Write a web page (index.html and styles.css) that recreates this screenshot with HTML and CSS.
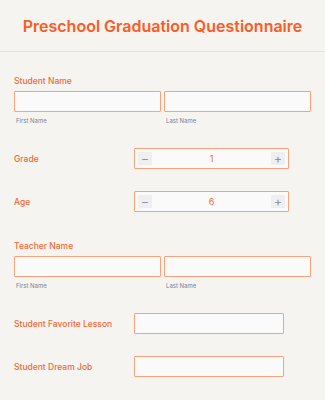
FILE: index.html
```html
<!DOCTYPE html>
<html lang="en">
<head>
    <meta charset="UTF-8">
    <meta name="viewport" content="width=device-width, initial-scale=1.0">
    <title>Preschool Graduation Questionnaire</title>
    <link rel="stylesheet" href="styles.css">
</head>
<body>
    <div class="header">
        <h1>Preschool Graduation Questionnaire</h1>
    </div>
    <form class="form">
        <div class="form-line">
            <label class="label">Student Name</label>
            <div class="name-group">
                <div>
                    <input type="text" name="student-first">
                    <small>First Name</small>
                </div>
                <div>
                    <input type="text" name="student-last">
                    <small>Last Name</small>
                </div>
            </div>
        </div>

        <div class="form-line row">
            <label class="label">Grade</label>
            <div class="spinner">
                <span class="spin-btn">&minus;</span>
                <span class="spin-value">1</span>
                <span class="spin-btn">+</span>
            </div>
        </div>

        <div class="form-line row">
            <label class="label">Age</label>
            <div class="spinner">
                <span class="spin-btn">&minus;</span>
                <span class="spin-value">6</span>
                <span class="spin-btn">+</span>
            </div>
        </div>

        <div class="form-line spaced">
            <label class="label">Teacher Name</label>
            <div class="name-group">
                <div>
                    <input type="text" name="teacher-first">
                    <small>First Name</small>
                </div>
                <div>
                    <input type="text" name="teacher-last">
                    <small>Last Name</small>
                </div>
            </div>
        </div>

        <div class="form-line row">
            <label class="label">Student Favorite Lesson</label>
            <input type="text" class="short" name="lesson">
        </div>

        <div class="form-line row">
            <label class="label">Student Dream Job</label>
            <input type="text" class="short" name="dream-job">
        </div>
    </form>
</body>
</html>
```

FILE: styles.css
```css
body {
    font-family: Inter, "Liberation Sans", Arial, sans-serif;
    background-color: #f5f4f1;
    margin: 0;
    padding: 0;
}

.header {
    height: 51px;
    border-bottom: 1px solid #e3e2df;
    display: flex;
    align-items: center;
    justify-content: center;
}

h1 {
    margin: 0;
    font-size: 16px;
    font-weight: 600;
    color: #ff5a1f;
}

.form {
    padding-top: 12px;
}

.form-line {
    padding: 11px 14px;
}

.form-line.spaced {
    padding-top: 17px;
}

.label {
    display: block;
    font-size: 8.5px;
    line-height: 12px;
    font-weight: 500;
    color: #f26a33;
    margin-bottom: 4px;
}

.row {
    display: flex;
    align-items: center;
}

.row .label {
    width: 120px;
    margin-bottom: 0;
}

.name-group {
    display: grid;
    grid-template-columns: 1fr 1fr;
    gap: 3px;
}

input[type="text"] {
    display: block;
    width: 100%;
    height: 21px;
    border: 1px solid #f9a27c;
    border-radius: 1px;
    background-color: #fafafa;
    box-sizing: border-box;
    margin: 0;
    padding: 0 4px;
}

input.short {
    width: 150px;
}

small {
    display: block;
    margin-top: 4px;
    padding-left: 2px;
    font-size: 6px;
    line-height: 10px;
    color: #7c8092;
}

.spinner {
    width: 155px;
    height: 21px;
    border: 1px solid #f9a27c;
    border-radius: 1px;
    background-color: #fafafa;
    box-sizing: border-box;
    display: flex;
    align-items: center;
    padding: 0 3px;
}

.spin-btn {
    width: 14px;
    height: 13px;
    background-color: #efeff0;
    color: #8d90a6;
    font-size: 12px;
    line-height: 13px;
    text-align: center;
}

.spin-value {
    flex: 1;
    text-align: center;
    font-size: 9px;
    color: #f26a33;
}
```
